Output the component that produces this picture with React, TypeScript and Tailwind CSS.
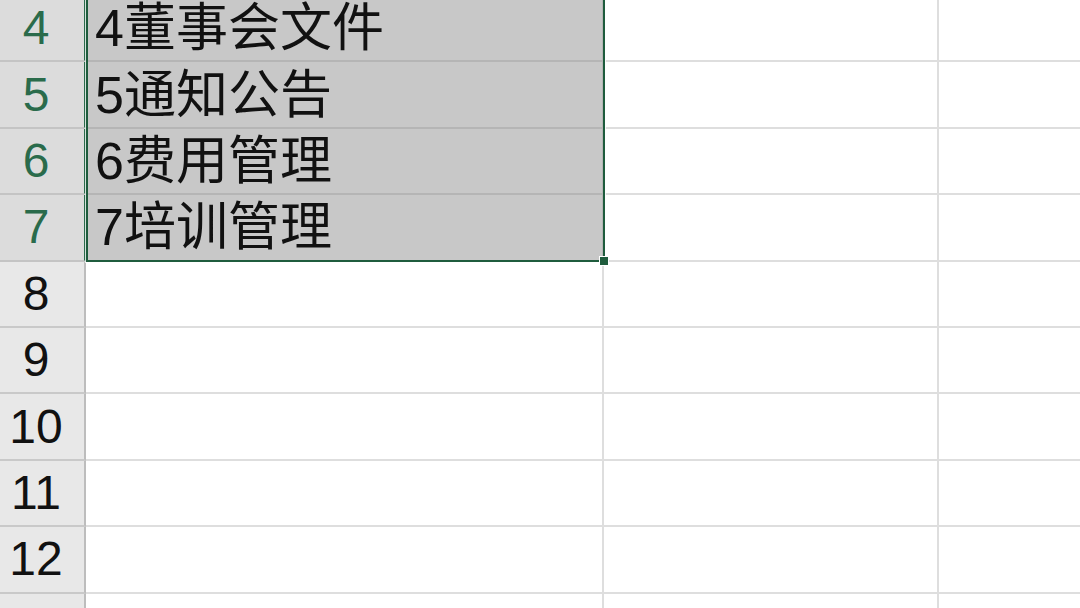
import React from "react";

const FUENTE = { fontFamily: '"Liberation Sans", "Noto Sans CJK SC", sans-serif' };

const FILAS: { n: number; texto: string }[] = [
  { n: 4, texto: "4董事会文件" },
  { n: 5, texto: "5通知公告" },
  { n: 6, texto: "6费用管理" },
  { n: 7, texto: "7培训管理" },
  { n: 8, texto: "" },
  { n: 9, texto: "" },
  { n: 10, texto: "" },
  { n: 11, texto: "" },
  { n: 12, texto: "" },
  { n: 13, texto: "" },
];

export default function App() {
  return (
    <div className="relative h-[608px] w-[1080px] overflow-hidden bg-white" style={FUENTE}>
      <div className="-mt-[4px]">
        {FILAS.map((f) => {
          const sel = f.n <= 7;
          return (
            <div key={f.n} className="flex h-[66.4px]">
              <div
                className={`flex w-[86px] shrink-0 items-center justify-center border-b-2 border-r-2 pr-[12px] text-[48px] leading-none ${
                  sel
                    ? "border-b-[#c4c4c4] border-r-[#2a6b4b] bg-[#dcdcdc] text-[#2a6b4b]"
                    : "border-b-[#c9c9c9] border-r-[#bdbdbd] bg-[#e8e8e8] text-[#111]"
                }`}
              >
                {f.n}
              </div>
              <div
                className={`flex w-[518px] shrink-0 items-center whitespace-nowrap border-b-2 border-r-2 pl-[9px] text-[52px] leading-none text-[#111] ${
                  sel ? "border-[#b5b5b5] bg-[#c8c8c8]" : "border-[#dedede]"
                }`}
              >
                {f.texto}
              </div>
              <div className="w-[335px] shrink-0 border-b-2 border-r-2 border-[#dedede]" />
              <div className="flex-1 border-b-2 border-[#dedede]" />
            </div>
          );
        })}
      </div>

      {/* marco de la selección A4:A7 */}
      <div className="pointer-events-none absolute left-[86px] top-[-10px] h-[272px] w-[519px] border-[2.5px] border-[#1f5c3d] shadow-[0_0_0_1px_rgba(255,255,255,0.8)]" />
      {/* tirador de relleno */}
      <div className="absolute left-[599px] top-[256px] h-[10px] w-[10px] border border-white bg-[#1f5c3d]" />
    </div>
  );
}
